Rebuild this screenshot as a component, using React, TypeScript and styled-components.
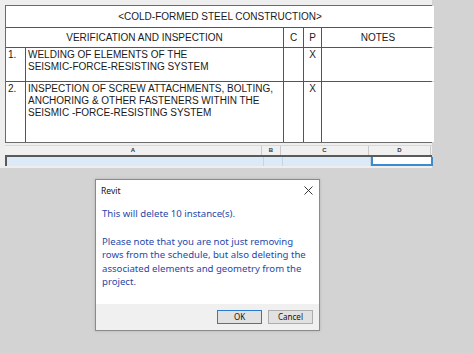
import React from 'react';
import styled, { createGlobalStyle } from 'styled-components';

const GlobalStyle = createGlobalStyle`
  html, body {
    margin: 0;
    padding: 0;
    background: #d3d3d3;
  }
  body {
    width: 474px;
    height: 353px;
    overflow: hidden;
    font-family: "Liberation Sans", Arial, sans-serif;
  }
`;

const Page = styled.div`
  position: relative;
  width: 474px;
  height: 353px;
  background: #d3d3d3;
`;

const Sheet = styled.div`
  width: 432px;
  background: #eeeeee;
  padding: 5px 0 2px 5px;
  box-sizing: border-box;
`;

const Schedule = styled.div`
  display: grid;
  grid-template-columns: 19px 257px 19px 17px 112px;
  grid-template-rows: 21px 19px 33px 60px;
  gap: 1px;
  width: 427px;
  box-sizing: border-box;
  border: 1px solid #6a6a6a;
  background: #555555;
  color: #1a1a1a;
  font-size: 10px;
  line-height: 12px;
`;

const Cell = styled.div<{ $span?: number; $center?: boolean }>`
  background: #ffffff;
  grid-column: span ${p => p.$span ?? 1};
  display: flex;
  align-items: ${p => (p.$center ? 'center' : 'flex-start')};
  justify-content: ${p => (p.$center ? 'center' : 'flex-start')};
  padding: ${p => (p.$center ? '0' : '1px 2px')};
  box-sizing: border-box;
  white-space: pre-line;
`;

const Mark = styled(Cell)`
  justify-content: center;
  padding-top: 1px;
`;

const ColumnBar = styled.div`
  display: grid;
  grid-template-columns: 257px 19px 88px 62px;
  margin-top: 2px;
  width: 427px;
  height: 9px;
  border-top: 1px solid #d8d8d8;
  background: #f0f0f0;
`;

const ColumnLetter = styled.div`
  border-right: 1px solid #c9c9c9;
  font-size: 6px;
  font-weight: bold;
  line-height: 9px;
  text-align: center;
  color: #333;
`;

const SelectedRow = styled.div`
  display: grid;
  grid-template-columns: 257px 19px 88px 62px;
  width: 427px;
  height: 11px;
  box-sizing: border-box;
  border-top: 2px solid #5a5a5a;
  border-left: 2px solid #5a5a5a;
  background: #dbeaf6;
`;

const SelectedCell = styled.div<{ $active?: boolean }>`
  border-right: 1px solid ${p => (p.$active ? '#3a8bd0' : '#c5d6e3')};
  background: ${p => (p.$active ? '#ffffff' : 'transparent')};
  box-sizing: border-box;
  ${p => p.$active && 'border: 2px solid #3a8bd0; border-top: 0;'}
`;

const Dialog = styled.div`
  position: absolute;
  left: 95px;
  top: 179px;
  width: 225px;
  height: 152px;
  box-sizing: border-box;
  background: #ffffff;
  border: 1px solid #8a8a8a;
  box-shadow: 0 0 3px rgba(0, 0, 0, 0.15);
  display: flex;
  flex-direction: column;
  font-family: "Noto Sans", "Open Sans", sans-serif;
`;

const TitleBar = styled.div`
  height: 18px;
  display: flex;
  align-items: center;
  justify-content: space-between;
  padding: 1px 6px 0 5px;
  font-size: 8.5px;
  color: #111;
`;

const Body = styled.div`
  flex: 1;
  padding: 8px 6px 0 6px;
  color: #2548ab;
  font-size: 9.6px;
  line-height: 13.5px;
  white-space: pre;
`;

const Para = styled.p`
  margin: 0 0 14px 0;
`;

const Footer = styled.div`
  height: 26px;
  background: #f0f0f0;
  display: flex;
  align-items: center;
  justify-content: flex-end;
  gap: 6px;
  padding-right: 6px;
`;

const Button = styled.button<{ $default?: boolean }>`
  width: 45px;
  height: 14px;
  padding: 0;
  box-sizing: border-box;
  background: #e1e1e1;
  border: 1px solid ${p => (p.$default ? '#2a7ad2' : '#adadad')};
  font-family: "Noto Sans", "Open Sans", sans-serif;
  font-size: 8px;
  line-height: 12px;
  color: #111;
`;

const Close = () => (
  <svg width="9" height="9" viewBox="0 0 9 9">
    <path d="M0.5 0.5 L8.5 8.5 M8.5 0.5 L0.5 8.5" stroke="#222" strokeWidth="0.9" fill="none" />
  </svg>
);

export default function App() {
  return (
    <Page>
      <GlobalStyle />
      <Sheet>
        <Schedule>
          <Cell $span={5} $center>&lt;COLD-FORMED STEEL CONSTRUCTION&gt;</Cell>
          <Cell $span={2} $center>VERIFICATION AND INSPECTION</Cell>
          <Cell $center>C</Cell>
          <Cell $center>P</Cell>
          <Cell $center>NOTES</Cell>

          <Cell>1.</Cell>
          <Cell>{'WELDING OF ELEMENTS OF THE\nSEISMIC-FORCE-RESISTING SYSTEM'}</Cell>
          <Cell />
          <Mark>X</Mark>
          <Cell />

          <Cell>2.</Cell>
          <Cell>
            {'INSPECTION OF SCREW ATTACHMENTS, BOLTING,\nANCHORING & OTHER FASTENERS WITHIN THE\nSEISMIC -FORCE-RESISTING SYSTEM'}
          </Cell>
          <Cell />
          <Mark>X</Mark>
          <Cell />
        </Schedule>
        <ColumnBar>
          <ColumnLetter>A</ColumnLetter>
          <ColumnLetter>B</ColumnLetter>
          <ColumnLetter>C</ColumnLetter>
          <ColumnLetter>D</ColumnLetter>
        </ColumnBar>
        <SelectedRow>
          <SelectedCell />
          <SelectedCell />
          <SelectedCell />
          <SelectedCell $active />
        </SelectedRow>
      </Sheet>

      <Dialog>
        <TitleBar>
          <span>Revit</span>
          <Close />
        </TitleBar>
        <Body>
          <Para>This will delete 10 instance(s).</Para>
          <Para>
            {'Please note that you are not just removing\nrows from the schedule, but also deleting the\nassociated elements and geometry from the\nproject.'}
          </Para>
        </Body>
        <Footer>
          <Button $default>OK</Button>
          <Button>Cancel</Button>
        </Footer>
      </Dialog>
    </Page>
  );
}
